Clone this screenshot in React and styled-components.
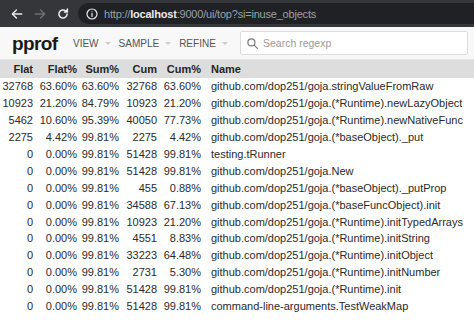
import React from "react";
import styled, { createGlobalStyle } from "styled-components";

const GlobalStyle = createGlobalStyle`
  html, body {
    margin: 0;
    padding: 0;
    background: #fff;
    overflow: hidden;
  }
  body {
    font-family: "Liberation Sans", Arial, sans-serif;
  }
`;

const Page = styled.div`
  width: 474px;
  height: 327px;
  overflow: hidden;
  background: #fff;
`;

const ChromeBar = styled.div`
  height: 27px;
  background: #35363a;
  display: flex;
  align-items: center;
  padding-left: 5px;
  box-sizing: border-box;
`;

const NavButton = styled.div`
  width: 23px;
  height: 22px;
  display: flex;
  align-items: center;
  justify-content: center;
  color: ${(props) => (props.dim ? "#6f7074" : "#e8eaed")};
`;

const Omnibox = styled.div`
  flex: 1;
  height: 21px;
  margin-left: 4px;
  background: #202124;
  border-radius: 11px 0 0 11px;
  display: flex;
  align-items: center;
  padding-left: 8px;
  gap: 6px;
  font-size: 11px;
  letter-spacing: -0.2px;
  color: #9aa0a6;
  white-space: nowrap;
  overflow: hidden;
`;

const Host = styled.span`
  color: #e8eaed;
  font-weight: bold;
`;

const Toolbar = styled.div`
  height: 32px;
  background: #f8f8f8;
  display: flex;
  align-items: center;
  padding: 0 6px 0 12px;
  border-bottom: 1px solid #e6e6e6;
`;

const Title = styled.div`
  font-size: 19px;
  font-weight: bold;
  color: #1a1a1a;
  letter-spacing: -0.6px;
  width: 61px;
  margin-top: 1px;
`;

const Menu = styled.div`
  display: flex;
  align-items: center;
  gap: 3px;
  font-size: 10px;
  color: #555;
  margin-right: ${(props) => props.mr}px;
`;

const Caret = styled.span`
  width: 0;
  height: 0;
  border-left: 3px solid transparent;
  border-right: 3px solid transparent;
  border-top: 3px solid #ccc;
  margin-left: 3px;
`;

const Search = styled.div`
  margin-left: auto;
  width: 228px;
  height: 24px;
  box-sizing: border-box;
  background: #fff;
  border: 1px solid #dcdcdc;
  border-radius: 2px;
  display: flex;
  align-items: center;
  padding-left: 5px;
  gap: 4px;
  font-size: 10.5px;
  color: #999;
`;

const Table = styled.table`
  border-collapse: collapse;
  table-layout: fixed;
  font-size: 11px;
  color: #2a2a2a;
  width: 474px;
`;

const HeadCell = styled.th`
  background: #dddddd;
  height: 18px;
  font-weight: bold;
  text-align: ${(props) => (props.left ? "left" : "right")};
  padding: 0 0 0 ${(props) => props.pl ?? 0}px;
  white-space: nowrap;
  color: #262626;
`;

const Cell = styled.td`
  height: 16.9px;
  padding: 0 0 0 ${(props) => props.pl ?? 0}px;
  text-align: ${(props) => (props.left ? "left" : "right")};
  white-space: nowrap;
  overflow: hidden;
`;

const BackIcon = () => (
  <svg width="14" height="14" viewBox="0 0 24 24" fill="none" stroke="currentColor" strokeWidth="2.4" strokeLinecap="round" strokeLinejoin="round">
    <path d="M20 12H5" />
    <path d="M11 5l-7 7 7 7" />
  </svg>
);

const ForwardIcon = () => (
  <svg width="14" height="14" viewBox="0 0 24 24" fill="none" stroke="currentColor" strokeWidth="2.4" strokeLinecap="round" strokeLinejoin="round">
    <path d="M4 12h15" />
    <path d="M13 5l7 7-7 7" />
  </svg>
);

const ReloadIcon = () => (
  <svg width="14" height="14" viewBox="0 0 24 24" fill="none" stroke="currentColor" strokeWidth="2.6" strokeLinecap="round">
    <path d="M19 12a7 7 0 1 1-2.3-5.2" />
    <path d="M19.5 3.5v5h-5" fill="currentColor" strokeLinejoin="round" />
  </svg>
);

const InfoIcon = () => (
  <svg width="12" height="12" viewBox="0 0 24 24" fill="none" stroke="#e8eaed" strokeWidth="2.4">
    <circle cx="12" cy="12" r="10" />
    <path d="M12 11v6" strokeLinecap="round" />
    <circle cx="12" cy="7.5" r="1.2" fill="#e8eaed" stroke="none" />
  </svg>
);

const SearchIcon = () => (
  <svg width="13" height="13" viewBox="0 0 24 24" fill="none" stroke="#777" strokeWidth="2.2" strokeLinecap="round">
    <circle cx="10" cy="10" r="6.5" />
    <path d="M15 15l6 6" />
  </svg>
);

const rows = [
  ["32768", "63.60%", "63.60%", "32768", "63.60%", "github.com/dop251/goja.stringValueFromRaw"],
  ["10923", "21.20%", "84.79%", "10923", "21.20%", "github.com/dop251/goja.(*Runtime).newLazyObject"],
  ["5462", "10.60%", "95.39%", "40050", "77.73%", "github.com/dop251/goja.(*Runtime).newNativeFunc"],
  ["2275", "4.42%", "99.81%", "2275", "4.42%", "github.com/dop251/goja.(*baseObject)._put"],
  ["0", "0.00%", "99.81%", "51428", "99.81%", "testing.tRunner"],
  ["0", "0.00%", "99.81%", "51428", "99.81%", "github.com/dop251/goja.New"],
  ["0", "0.00%", "99.81%", "455", "0.88%", "github.com/dop251/goja.(*baseObject)._putProp"],
  ["0", "0.00%", "99.81%", "34588", "67.13%", "github.com/dop251/goja.(*baseFuncObject).init"],
  ["0", "0.00%", "99.81%", "10923", "21.20%", "github.com/dop251/goja.(*Runtime).initTypedArrays"],
  ["0", "0.00%", "99.81%", "4551", "8.83%", "github.com/dop251/goja.(*Runtime).initString"],
  ["0", "0.00%", "99.81%", "33223", "64.48%", "github.com/dop251/goja.(*Runtime).initObject"],
  ["0", "0.00%", "99.81%", "2731", "5.30%", "github.com/dop251/goja.(*Runtime).initNumber"],
  ["0", "0.00%", "99.81%", "51428", "99.81%", "github.com/dop251/goja.(*Runtime).init"],
  ["0", "0.00%", "99.81%", "51428", "99.81%", "command-line-arguments.TestWeakMap"],
];

const headers = ["Flat", "Flat%", "Sum%", "Cum", "Cum%"];
const widths = [33, 44, 42, 38, 44];

export default function App() {
  return (
    <Page>
      <GlobalStyle />
      <ChromeBar>
        <NavButton><BackIcon /></NavButton>
        <NavButton dim><ForwardIcon /></NavButton>
        <NavButton><ReloadIcon /></NavButton>
        <Omnibox>
          <InfoIcon />
          <span>
            http://<Host>localhost</Host>:9000/ui/top?si=inuse_objects
          </span>
        </Omnibox>
      </ChromeBar>
      <Toolbar>
        <Title>pprof</Title>
        <Menu mr={8}>VIEW<Caret /></Menu>
        <Menu mr={8}>SAMPLE<Caret /></Menu>
        <Menu mr={0}>REFINE<Caret /></Menu>
        <Search>
          <SearchIcon />
          <span>Search regexp</span>
        </Search>
      </Toolbar>
      <Table>
        <colgroup>
          {widths.map((w, i) => (
            <col key={i} style={{ width: w }} />
          ))}
          <col />
        </colgroup>
        <thead>
          <tr>
            {headers.map((h) => (
              <HeadCell key={h}>{h}</HeadCell>
            ))}
            <HeadCell left pl={10}>Name</HeadCell>
          </tr>
        </thead>
        <tbody>
          {rows.map((r, i) => (
            <tr key={i}>
              {r.slice(0, 5).map((v, j) => (
                <Cell key={j}>{v}</Cell>
              ))}
              <Cell left pl={10}>{r[5]}</Cell>
            </tr>
          ))}
        </tbody>
      </Table>
    </Page>
  );
}
